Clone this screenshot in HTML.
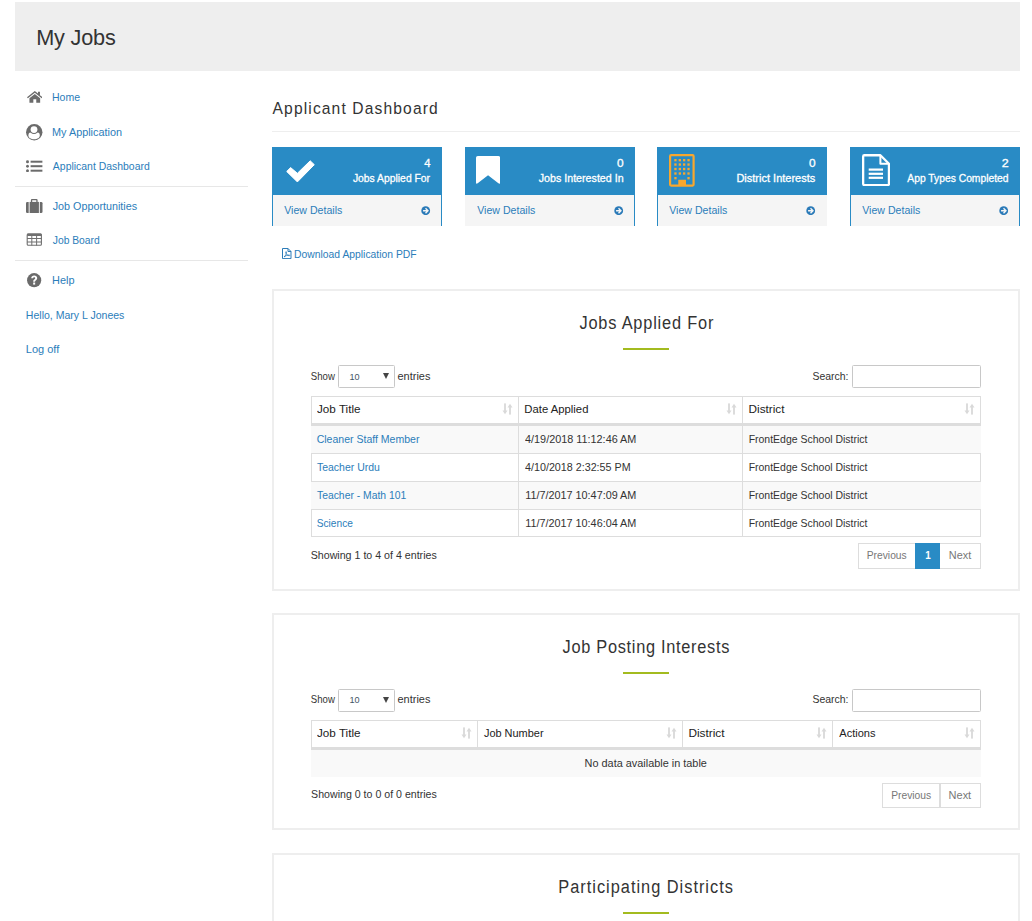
<!DOCTYPE html>
<html>
<head>
<meta charset="utf-8">
<title>My Jobs</title>
<style>
*{box-sizing:border-box;margin:0;padding:0}
html,body{width:1032px;height:921px;overflow:hidden;background:#fff}
body{font-family:"Liberation Sans",sans-serif;font-size:11px;color:#333;position:relative}
.b,.a{position:absolute;display:block}
.t{position:absolute;white-space:nowrap;transform-origin:0 0}
</style>
</head>
<body>
<div class="b" style="left:15px;top:2px;width:1005px;height:69px;background:#eeeeee;"></div>
<div class="b" style="left:15px;top:186px;width:233px;height:1px;background:#e7e7e7;"></div>
<div class="b" style="left:15px;top:260px;width:233px;height:1px;background:#e7e7e7;"></div>
<div class="b" style="left:272px;top:131px;width:748px;height:1px;background:#eeeeee;"></div>
<div class="b" style="left:272px;top:147px;width:170px;height:48px;background:#298bc5;"></div>
<div class="b" style="left:272px;top:195px;width:170px;height:31px;background:#f5f5f5;"></div>
<div class="b" style="left:272px;top:195px;width:1px;height:31px;background:#298bc5;"></div>
<div class="b" style="left:441px;top:195px;width:1px;height:31px;background:#298bc5;"></div>
<svg class="a" style="left:421.2px;top:205.7px" width="9.4" height="9.4" viewBox="0 0 10 10"><circle cx="5" cy="5" r="4.7" fill="#2a7ab8"/><path fill="none" stroke="#f5f5f5" stroke-width="1.5" d="M2.2 5 H7.2 M4.8 2.4 L7.4 5 L4.8 7.6"/></svg>
<div class="b" style="left:465px;top:147px;width:170px;height:48px;background:#298bc5;"></div>
<div class="b" style="left:465px;top:195px;width:170px;height:31px;background:#f5f5f5;"></div>
<div class="b" style="left:634px;top:195px;width:1px;height:31px;background:#298bc5;"></div>
<svg class="a" style="left:614.2px;top:205.7px" width="9.4" height="9.4" viewBox="0 0 10 10"><circle cx="5" cy="5" r="4.7" fill="#2a7ab8"/><path fill="none" stroke="#f5f5f5" stroke-width="1.5" d="M2.2 5 H7.2 M4.8 2.4 L7.4 5 L4.8 7.6"/></svg>
<div class="b" style="left:657px;top:147px;width:170px;height:48px;background:#298bc5;"></div>
<div class="b" style="left:657px;top:195px;width:170px;height:31px;background:#f5f5f5;"></div>
<div class="b" style="left:657px;top:195px;width:1px;height:31px;background:#298bc5;"></div>
<svg class="a" style="left:806.2px;top:205.7px" width="9.4" height="9.4" viewBox="0 0 10 10"><circle cx="5" cy="5" r="4.7" fill="#2a7ab8"/><path fill="none" stroke="#f5f5f5" stroke-width="1.5" d="M2.2 5 H7.2 M4.8 2.4 L7.4 5 L4.8 7.6"/></svg>
<div class="b" style="left:850px;top:147px;width:170px;height:48px;background:#298bc5;"></div>
<div class="b" style="left:850px;top:195px;width:170px;height:31px;background:#f5f5f5;"></div>
<div class="b" style="left:850px;top:195px;width:1px;height:31px;background:#298bc5;"></div>
<div class="b" style="left:1019px;top:195px;width:1px;height:31px;background:#298bc5;"></div>
<svg class="a" style="left:999.2px;top:205.7px" width="9.4" height="9.4" viewBox="0 0 10 10"><circle cx="5" cy="5" r="4.7" fill="#2a7ab8"/><path fill="none" stroke="#f5f5f5" stroke-width="1.5" d="M2.2 5 H7.2 M4.8 2.4 L7.4 5 L4.8 7.6"/></svg>
<div class="b" style="left:272px;top:289px;width:748px;height:302px;border:2px solid #eeeeee"></div>
<div class="b" style="left:623px;top:348px;width:46px;height:2px;background:#a3bb1f;"></div>
<div class="b" style="left:272px;top:613px;width:748px;height:217px;border:2px solid #eeeeee"></div>
<div class="b" style="left:623px;top:672px;width:46px;height:2px;background:#a3bb1f;"></div>
<div class="b" style="left:272px;top:853px;width:748px;height:120px;border:2px solid #eeeeee"></div>
<div class="b" style="left:623px;top:912px;width:46px;height:2px;background:#a3bb1f;"></div>
<div class="b" style="left:338px;top:365px;width:57px;height:23px;border:1px solid #c8c8c8;border-radius:1.5px;background:#fff"></div>
<div class="b" style="left:383px;top:373px;width:0;height:0;border-left:3px solid transparent;border-right:3px solid transparent;border-top:6px solid #444"></div>
<div class="b" style="left:852px;top:365px;width:129px;height:23px;border:1px solid #c8c8c8;border-radius:1.5px;background:#fff"></div>
<div class="b" style="left:338px;top:689px;width:57px;height:23px;border:1px solid #c8c8c8;border-radius:1.5px;background:#fff"></div>
<div class="b" style="left:383px;top:697px;width:0;height:0;border-left:3px solid transparent;border-right:3px solid transparent;border-top:6px solid #444"></div>
<div class="b" style="left:852px;top:689px;width:129px;height:23px;border:1px solid #c8c8c8;border-radius:1.5px;background:#fff"></div>
<div class="b" style="left:311px;top:396px;width:670px;height:1px;background:#ddd;"></div>
<div class="b" style="left:311px;top:396px;width:1px;height:27px;background:#ddd;"></div>
<div class="b" style="left:980px;top:396px;width:1px;height:27px;background:#ddd;"></div>
<div class="b" style="left:311px;top:423px;width:670px;height:3px;background:#ddd;"></div>
<div class="b" style="left:311px;top:426px;width:670px;height:27px;background:#f9f9f9;"></div>
<div class="b" style="left:311px;top:453px;width:670px;height:1px;background:#ddd;"></div>
<div class="b" style="left:311px;top:454px;width:1px;height:27px;background:#ddd;"></div>
<div class="b" style="left:980px;top:454px;width:1px;height:27px;background:#ddd;"></div>
<div class="b" style="left:311px;top:481px;width:670px;height:1px;background:#ddd;"></div>
<div class="b" style="left:311px;top:482px;width:670px;height:27px;background:#f9f9f9;"></div>
<div class="b" style="left:311px;top:509px;width:670px;height:1px;background:#ddd;"></div>
<div class="b" style="left:311px;top:510px;width:1px;height:26px;background:#ddd;"></div>
<div class="b" style="left:980px;top:510px;width:1px;height:26px;background:#ddd;"></div>
<div class="b" style="left:311px;top:536px;width:670px;height:1px;background:#ddd;"></div>
<div class="b" style="left:518px;top:396px;width:1px;height:141px;background:#ddd;"></div>
<div class="b" style="left:742px;top:396px;width:1px;height:141px;background:#ddd;"></div>
<svg class="a" style="left:502px;top:403px" width="11" height="12" viewBox="0 0 11 12"><g fill="#d9d9d9"><rect x="2.1" y=".4" width="1.8" height="8"/><path d="M.5 7.4 H5.5 L3 11.2z"/><rect x="7.1" y="3.6" width="1.8" height="8"/><path d="M5.5 4.6 H10.5 L8 .8z"/></g></svg>
<svg class="a" style="left:726px;top:403px" width="11" height="12" viewBox="0 0 11 12"><g fill="#d9d9d9"><rect x="2.1" y=".4" width="1.8" height="8"/><path d="M.5 7.4 H5.5 L3 11.2z"/><rect x="7.1" y="3.6" width="1.8" height="8"/><path d="M5.5 4.6 H10.5 L8 .8z"/></g></svg>
<svg class="a" style="left:964px;top:403px" width="11" height="12" viewBox="0 0 11 12"><g fill="#d9d9d9"><rect x="2.1" y=".4" width="1.8" height="8"/><path d="M.5 7.4 H5.5 L3 11.2z"/><rect x="7.1" y="3.6" width="1.8" height="8"/><path d="M5.5 4.6 H10.5 L8 .8z"/></g></svg>
<div class="b" style="left:858px;top:543px;width:123px;height:26px;border:1px solid #ddd;background:#fff"></div>
<div class="b" style="left:915px;top:543px;width:25px;height:26px;background:#298bc5;"></div>
<div class="b" style="left:311px;top:720px;width:670px;height:1px;background:#ddd;"></div>
<div class="b" style="left:311px;top:720px;width:1px;height:27px;background:#ddd;"></div>
<div class="b" style="left:980px;top:720px;width:1px;height:27px;background:#ddd;"></div>
<div class="b" style="left:311px;top:747px;width:670px;height:3px;background:#ddd;"></div>
<div class="b" style="left:311px;top:750px;width:670px;height:27px;background:#f9f9f9;"></div>
<div class="b" style="left:477px;top:720px;width:1px;height:27px;background:#ddd;"></div>
<div class="b" style="left:682px;top:720px;width:1px;height:27px;background:#ddd;"></div>
<div class="b" style="left:832px;top:720px;width:1px;height:27px;background:#ddd;"></div>
<svg class="a" style="left:461px;top:727px" width="11" height="12" viewBox="0 0 11 12"><g fill="#d9d9d9"><rect x="2.1" y=".4" width="1.8" height="8"/><path d="M.5 7.4 H5.5 L3 11.2z"/><rect x="7.1" y="3.6" width="1.8" height="8"/><path d="M5.5 4.6 H10.5 L8 .8z"/></g></svg>
<svg class="a" style="left:666px;top:727px" width="11" height="12" viewBox="0 0 11 12"><g fill="#d9d9d9"><rect x="2.1" y=".4" width="1.8" height="8"/><path d="M.5 7.4 H5.5 L3 11.2z"/><rect x="7.1" y="3.6" width="1.8" height="8"/><path d="M5.5 4.6 H10.5 L8 .8z"/></g></svg>
<svg class="a" style="left:816px;top:727px" width="11" height="12" viewBox="0 0 11 12"><g fill="#d9d9d9"><rect x="2.1" y=".4" width="1.8" height="8"/><path d="M.5 7.4 H5.5 L3 11.2z"/><rect x="7.1" y="3.6" width="1.8" height="8"/><path d="M5.5 4.6 H10.5 L8 .8z"/></g></svg>
<svg class="a" style="left:964px;top:727px" width="11" height="12" viewBox="0 0 11 12"><g fill="#d9d9d9"><rect x="2.1" y=".4" width="1.8" height="8"/><path d="M.5 7.4 H5.5 L3 11.2z"/><rect x="7.1" y="3.6" width="1.8" height="8"/><path d="M5.5 4.6 H10.5 L8 .8z"/></g></svg>
<div class="b" style="left:882px;top:783px;width:99px;height:25px;border:1px solid #ddd;background:#fff"></div>
<div class="b" style="left:939px;top:783px;width:2px;height:25px;background:#ddd;"></div>
<!-- home -->
<svg class="a" style="left:26.5px;top:91.4px" width="15.6" height="11.8" viewBox="0 0 16 12"><g fill="#6b6b6b"><path d="M8 0 L0 6.4 L.9 7.5 L8 1.8 L15.1 7.5 L16 6.4 L13.3 4.2 V.8 H11.3 V2.6z"/><path d="M8 2.9 L2.5 7.3 V12 H6.5 V8.3 H9.5 V12 H13.5 V7.3z"/></g></svg>
<!-- user -->
<svg class="a" style="left:26.2px;top:124px" width="16.5" height="16.5" viewBox="0 0 16.5 16.5"><circle cx="8.25" cy="8.25" r="8.2" fill="#6b6b6b"/><path fill="#fff" d="M2.4 11.6 C2.4 9.6 3.2 8.4 4.4 8.4 H11.8 C13 8.4 13.8 9.6 13.8 11.6 C13.8 13.8 11.4 15.3 8.1 15.3 C4.8 15.3 2.4 13.8 2.4 11.6z"/><circle cx="8" cy="5.6" r="4.5" fill="#6b6b6b"/><circle cx="8" cy="5.6" r="3.4" fill="#fff"/></svg>
<!-- list -->
<svg class="a" style="left:26.3px;top:160px" width="16.4" height="12.4" viewBox="0 0 16.4 12.4"><g fill="#6b6b6b"><circle cx="1.5" cy="1.7" r="1.5"/><circle cx="1.5" cy="6.2" r="1.5"/><circle cx="1.5" cy="10.7" r="1.5"/><rect x="4.6" y=".7" width="11.8" height="2"/><rect x="4.6" y="5.2" width="11.8" height="2"/><rect x="4.6" y="9.7" width="11.8" height="2"/></g></svg>
<!-- suitcase -->
<svg class="a" style="left:26.2px;top:199.2px" width="16.5" height="14" viewBox="0 0 16.5 14"><g fill="#6b6b6b"><path d="M1.3 2.9 H2.7 V14 H1.3 Q0 14 0 12.7 V4.2 Q0 2.9 1.3 2.9z"/><path d="M15.2 2.9 H13.8 V14 H15.2 Q16.5 14 16.5 12.7 V4.2 Q16.5 2.9 15.2 2.9z"/><rect x="3.6" y="2.9" width="9.3" height="11.1"/><path d="M4.9 3.1 V1.1 Q4.9 0 6 0 H10.5 Q11.6 0 11.6 1.1 V3.1 H10.3 V1.3 H6.2 V3.1z"/></g></svg>
<!-- table -->
<svg class="a" style="left:26px;top:233px" width="17" height="14" viewBox="0 0 17 14"><rect x="1.2" y="1" width="14.2" height="11.3" rx="1" fill="none" stroke="#707070" stroke-width="1.1"/><rect x="1" y=".6" width="14.6" height="2.3" rx=".6" fill="#707070"/><g fill="#707070"><rect x="5.3" y="2" width="1" height="10.5"/><rect x="10.1" y="2" width="1" height="10.5"/><rect x="1" y="5" width="14.6" height="1"/><rect x="1" y="8.5" width="14.6" height="1"/></g></svg>
<!-- help -->
<svg class="a" style="left:27.3px;top:273.3px" width="14.3" height="14.3" viewBox="0 0 14.3 14.3"><circle cx="7.15" cy="7.15" r="7.1" fill="#6b6b6b"/><path fill="#fff" d="M4.2 5.3 C4.3 3.5 5.6 2.5 7.2 2.5 C8.9 2.5 10.2 3.6 10.2 5.1 C10.2 6.3 9.5 6.9 8.8 7.4 C8.3 7.8 8.1 8 8.1 8.7 H6.2 C6.2 7.5 6.5 7 7.2 6.5 C7.8 6.1 8.2 5.8 8.2 5.2 C8.2 4.6 7.8 4.2 7.15 4.2 C6.5 4.2 6.1 4.6 6 5.3z"/><rect x="6.15" y="9.5" width="2" height="2.1" fill="#fff"/></svg>
<!-- check -->
<svg class="a" style="left:285.5px;top:159.6px" width="29.2" height="22.8" viewBox="0 0 29.2 22.8"><path fill="#fff" stroke="#fff" stroke-width="1" stroke-linejoin="round" d="M.7 11.5 L4.6 7.6 L11.4 13.3 L24.2 .8 L28.3 4.7 L11.4 21.9z"/></svg>
<!-- bookmark -->
<svg class="a" style="left:476px;top:156.2px" width="24.1" height="28.1" viewBox="0 0 24.1 28.1"><path fill="#fff" d="M1.8 0 H22.3 Q24.1 0 24.1 1.8 V26.4 Q24.1 28.6 22.4 27.3 L12.05 19.2 L1.7 27.3 Q0 28.6 0 26.4 V1.8 Q0 0 1.8 0z"/></svg>
<!-- building -->
<svg class="a" style="left:669.2px;top:153.9px" width="25.7" height="32.7" viewBox="0 0 25.7 32.1" preserveAspectRatio="none"><rect x="1.1" y="1.1" width="23.5" height="29.9" rx="1" fill="none" stroke="#f8a72e" stroke-width="2.2"/><g fill="#f8a72e">
<rect x="5.3" y="4.9" width="2.3" height="2.3"/><rect x="9.7" y="4.9" width="2.3" height="2.3"/><rect x="14" y="4.9" width="2.3" height="2.3"/><rect x="18.4" y="4.9" width="2.3" height="2.3"/>
<rect x="5.3" y="9.2" width="2.3" height="2.3"/><rect x="9.7" y="9.2" width="2.3" height="2.3"/><rect x="14" y="9.2" width="2.3" height="2.3"/><rect x="18.4" y="9.2" width="2.3" height="2.3"/>
<rect x="5.3" y="13.6" width="2.3" height="2.3"/><rect x="9.7" y="13.6" width="2.3" height="2.3"/><rect x="14" y="13.6" width="2.3" height="2.3"/><rect x="18.4" y="13.6" width="2.3" height="2.3"/>
<rect x="5.3" y="18" width="2.3" height="2.3"/><rect x="9.7" y="18" width="2.3" height="2.3"/><rect x="14" y="18" width="2.3" height="2.3"/><rect x="18.4" y="18" width="2.3" height="2.3"/>
<rect x="5.3" y="22.6" width="2.3" height="2.3"/><rect x="18.4" y="22.6" width="2.3" height="2.3"/>
<rect x="9.3" y="25.3" width="7.7" height="6"/></g></svg>
<!-- file -->
<svg class="a" style="left:861.9px;top:154.1px" width="28.1" height="32.3" viewBox="0 0 28.1 32.1"><path fill="none" stroke="#fff" stroke-width="2.3" stroke-linejoin="round" d="M2.4 1.15 H18.4 L26.95 9.7 V29.7 Q26.95 30.95 25.7 30.95 H2.4 Q1.15 30.95 1.15 29.7 V2.4 Q1.15 1.15 2.4 1.15z"/><path fill="none" stroke="#fff" stroke-width="2" stroke-linejoin="round" d="M18.4 1.15 V9.7 H26.95"/><g fill="#fff"><rect x="6.7" y="14.4" width="14.3" height="2.2"/><rect x="6.7" y="18.6" width="14.3" height="2.2"/><rect x="6.7" y="22.6" width="14.3" height="2.2"/></g></svg>
<!-- pdf -->
<svg class="a" style="left:282px;top:248.4px" width="9.5" height="11.1" viewBox="0 0 9.5 11.1"><path fill="none" stroke="#2a7ab8" stroke-width="1" d="M.5 .5 H6 L9 3.5 V10.6 H.5z M6 .5 V3.5 H9"/><path fill="none" stroke="#2a7ab8" stroke-width=".8" d="M2 9 C3.4 8 4.6 5.7 4.5 4.2 C4.4 3.3 3.6 3.5 3.7 4.3 C3.9 6 5.5 7.7 7.2 7.8 C8 7.8 8 7 7.2 7 C5.5 7 3.2 8 2 9z"/></svg>

<div class="t" id="title" style="left:36px;padding-left:0.23px;top:23px;font-size:22.8px;line-height:28px;color:#333;transform:scaleX(0.9500);letter-spacing:-0.191px">My Jobs</div>
<div class="t" id="home" style="left:52px;padding-left:0.04px;top:90px;font-size:11.2px;line-height:14px;color:#2b7dba;transform:scaleX(0.9392)">Home</div>
<div class="t" id="myapp" style="left:52px;padding-left:0.01px;top:125px;font-size:11.2px;line-height:14px;color:#2b7dba;transform:scaleX(0.9703)">My Application</div>
<div class="t" id="appdash" style="left:52px;padding-left:0.94px;top:159px;font-size:11.2px;line-height:14px;color:#2b7dba;transform:scaleX(0.9328)">Applicant Dashboard</div>
<div class="t" id="jobopp" style="left:52px;padding-left:0.76px;top:199px;font-size:11.2px;line-height:14px;color:#2b7dba;transform:scaleX(0.9620)">Job Opportunities</div>
<div class="t" id="jobboard" style="left:52px;padding-left:0.80px;top:233px;font-size:11.2px;line-height:14px;color:#2b7dba;transform:scaleX(0.9221)">Job Board</div>
<div class="t" id="help" style="left:52px;padding-left:0.00px;top:273px;font-size:11.2px;line-height:14px;color:#2b7dba;transform:scaleX(0.9757)">Help</div>
<div class="t" id="hello" style="left:25px;padding-left:0.89px;top:308px;font-size:11.2px;line-height:14px;color:#2b7dba;transform:scaleX(0.9415)">Hello, Mary L Jonees</div>
<div class="t" id="logoff" style="left:25px;padding-left:0.81px;top:342px;font-size:11.2px;line-height:14px;color:#2b7dba;transform:scaleX(0.9845)">Log off</div>
<div class="t" id="h1" style="left:272px;padding-left:0.61px;top:98px;font-size:16.8px;line-height:21px;color:#333;transform:scaleX(0.9300);letter-spacing:1.209px">Applicant Dashboard</div>
<div class="t" id="c0num" style="left:424px;padding-left:0.14px;top:156px;font-size:11.2px;line-height:14px;color:#fff;transform:scaleX(1.0090);-webkit-text-stroke:.3px #fff">4</div>
<div class="t" id="c0lab" style="left:352px;padding-left:1.01px;top:171px;font-size:11.2px;line-height:14px;color:#fff;transform:scaleX(0.9255);-webkit-text-stroke:.3px #fff">Jobs Applied For</div>
<div class="t" id="c0vd" style="left:284px;padding-left:0.27px;top:203px;font-size:11.2px;line-height:14px;color:#2b7dba;transform:scaleX(0.9457)">View Details</div>
<div class="t" id="c1num" style="left:616px;padding-left:0.88px;top:156px;font-size:11.2px;line-height:14px;color:#fff;transform:scaleX(1.0636);-webkit-text-stroke:.3px #fff">0</div>
<div class="t" id="c1lab" style="left:538px;padding-left:0.77px;top:171px;font-size:11.2px;line-height:14px;color:#fff;transform:scaleX(0.9542);-webkit-text-stroke:.3px #fff">Jobs Interested In</div>
<div class="t" id="c1vd" style="left:477px;padding-left:0.27px;top:203px;font-size:11.2px;line-height:14px;color:#2b7dba;transform:scaleX(0.9457)">View Details</div>
<div class="t" id="c2num" style="left:808px;padding-left:0.88px;top:156px;font-size:11.2px;line-height:14px;color:#fff;transform:scaleX(1.0636);-webkit-text-stroke:.3px #fff">0</div>
<div class="t" id="c2lab" style="left:736px;padding-left:0.40px;top:171px;font-size:11.2px;line-height:14px;color:#fff;transform:scaleX(0.9838);-webkit-text-stroke:.3px #fff">District Interests</div>
<div class="t" id="c2vd" style="left:669px;padding-left:0.27px;top:203px;font-size:11.2px;line-height:14px;color:#2b7dba;transform:scaleX(0.9457)">View Details</div>
<div class="t" id="c3num" style="left:1001px;padding-left:0.69px;top:156px;font-size:11.2px;line-height:14px;color:#fff;transform:scaleX(1.1159);-webkit-text-stroke:.3px #fff">2</div>
<div class="t" id="c3lab" style="left:907px;padding-left:0.30px;top:171px;font-size:11.2px;line-height:14px;color:#fff;transform:scaleX(0.9218);-webkit-text-stroke:.3px #fff">App Types Completed</div>
<div class="t" id="c3vd" style="left:862px;padding-left:0.27px;top:203px;font-size:11.2px;line-height:14px;color:#2b7dba;transform:scaleX(0.9457)">View Details</div>
<div class="t" id="dl" style="left:294px;padding-left:0.05px;top:247px;font-size:11.2px;line-height:14px;color:#2b7dba;transform:scaleX(0.9252)">Download Application PDF</div>
<div class="t" id="p1t" style="left:579px;padding-left:0.48px;top:312px;font-size:17.6px;line-height:22px;color:#333;transform:scaleX(0.9300);letter-spacing:0.863px">Jobs Applied For</div>
<div class="t" id="p2t" style="left:562px;padding-left:0.59px;top:636px;font-size:17.6px;line-height:22px;color:#333;transform:scaleX(0.9300);letter-spacing:0.755px">Job Posting Interests</div>
<div class="t" id="p3t" style="left:558px;padding-left:0.38px;top:876px;font-size:17.6px;line-height:22px;color:#333;transform:scaleX(0.9300);letter-spacing:1.064px">Participating Districts</div>
<div class="t" id="p1show" style="left:310px;padding-left:0.94px;top:370px;font-size:10.4px;line-height:13px;color:#333;transform:scaleX(0.9236)">Show</div>
<div class="t" id="p1ent" style="left:397px;padding-left:0.51px;top:370px;font-size:10.4px;line-height:13px;color:#333;transform:scaleX(1.0537)">entries</div>
<div class="t" id="p1srch" style="left:812px;padding-left:0.42px;top:370px;font-size:10.4px;line-height:13px;color:#333;transform:scaleX(1.0061)">Search:</div>
<div class="t" id="p1ten" style="left:349px;padding-left:0.48px;top:372px;font-size:8.6px;line-height:11px;color:#445566;transform:scaleX(1.0617)">10</div>
<div class="t" id="p2show" style="left:310px;padding-left:0.94px;top:693px;font-size:10.4px;line-height:13px;color:#333;transform:scaleX(0.9236)">Show</div>
<div class="t" id="p2ent" style="left:397px;padding-left:0.51px;top:693px;font-size:10.4px;line-height:13px;color:#333;transform:scaleX(1.0537)">entries</div>
<div class="t" id="p2srch" style="left:812px;padding-left:0.42px;top:693px;font-size:10.4px;line-height:13px;color:#333;transform:scaleX(1.0061)">Search:</div>
<div class="t" id="p2ten" style="left:349px;padding-left:0.48px;top:695px;font-size:8.6px;line-height:11px;color:#445566;transform:scaleX(1.0617)">10</div>
<div class="t" id="t1h1" style="left:317px;padding-left:0.02px;top:402px;font-size:11.2px;line-height:14px;color:#222;transform:scaleX(1.0439)">Job Title</div>
<div class="t" id="t1h2" style="left:524px;padding-left:0.37px;top:402px;font-size:11.2px;line-height:14px;color:#222;transform:scaleX(1.0095)">Date Applied</div>
<div class="t" id="t1h3" style="left:748px;padding-left:0.51px;top:402px;font-size:11.2px;line-height:14px;color:#222;transform:scaleX(1.0516)">District</div>
<div class="t" id="r0a" style="left:316px;padding-left:0.71px;top:432px;font-size:11.2px;line-height:14px;color:#2b7dba;transform:scaleX(0.9412)">Cleaner Staff Member</div>
<div class="t" id="r0b" style="left:525px;padding-left:0.05px;top:432px;font-size:11.2px;line-height:14px;color:#333;transform:scaleX(0.9692)">4/19/2018 11:12:46 AM</div>
<div class="t" id="r0c" style="left:748px;padding-left:0.68px;top:432px;font-size:11.2px;line-height:14px;color:#333;transform:scaleX(0.9369)">FrontEdge School District</div>
<div class="t" id="r1a" style="left:316px;padding-left:1.03px;top:460px;font-size:11.2px;line-height:14px;color:#2b7dba;transform:scaleX(0.9369)">Teacher Urdu</div>
<div class="t" id="r1b" style="left:525px;padding-left:0.06px;top:460px;font-size:11.2px;line-height:14px;color:#333;transform:scaleX(0.9584)">4/10/2018 2:32:55 PM</div>
<div class="t" id="r1c" style="left:748px;padding-left:0.68px;top:460px;font-size:11.2px;line-height:14px;color:#333;transform:scaleX(0.9369)">FrontEdge School District</div>
<div class="t" id="r2a" style="left:316px;padding-left:1.04px;top:488px;font-size:11.2px;line-height:14px;color:#2b7dba;transform:scaleX(0.9269)">Teacher - Math 101</div>
<div class="t" id="r2b" style="left:525px;padding-left:0.18px;top:488px;font-size:11.2px;line-height:14px;color:#333;transform:scaleX(0.9681)">11/7/2017 10:47:09 AM</div>
<div class="t" id="r2c" style="left:748px;padding-left:0.68px;top:488px;font-size:11.2px;line-height:14px;color:#333;transform:scaleX(0.9369)">FrontEdge School District</div>
<div class="t" id="r3a" style="left:316px;padding-left:0.81px;top:516px;font-size:11.2px;line-height:14px;color:#2b7dba;transform:scaleX(0.9096)">Science</div>
<div class="t" id="r3b" style="left:525px;padding-left:0.18px;top:516px;font-size:11.2px;line-height:14px;color:#333;transform:scaleX(0.9681)">11/7/2017 10:46:04 AM</div>
<div class="t" id="r3c" style="left:748px;padding-left:0.68px;top:516px;font-size:11.2px;line-height:14px;color:#333;transform:scaleX(0.9369)">FrontEdge School District</div>
<div class="t" id="info1" style="left:310px;padding-left:0.73px;top:548px;font-size:10.8px;line-height:14px;color:#333;transform:scaleX(0.9860)">Showing 1 to 4 of 4 entries</div>
<div class="t" id="pg1p" style="left:866px;padding-left:0.83px;top:548px;font-size:11.2px;line-height:14px;color:#777;transform:scaleX(0.9169)">Previous</div>
<div class="t" id="pg1n" style="left:925px;padding-left:0.43px;top:548px;font-size:11.2px;line-height:14px;color:#fff;transform:scaleX(0.8817);font-weight:bold">1</div>
<div class="t" id="pg1x" style="left:948px;padding-left:0.83px;top:548px;font-size:11.2px;line-height:14px;color:#777;transform:scaleX(0.9721)">Next</div>
<div class="t" id="t2h1" style="left:317px;padding-left:0.02px;top:726px;font-size:11.2px;line-height:14px;color:#222;transform:scaleX(1.0439)">Job Title</div>
<div class="t" id="t2h2" style="left:483px;padding-left:0.95px;top:726px;font-size:11.2px;line-height:14px;color:#222;transform:scaleX(0.9789)">Job Number</div>
<div class="t" id="t2h3" style="left:688px;padding-left:0.40px;top:726px;font-size:11.2px;line-height:14px;color:#222;transform:scaleX(1.0577)">District</div>
<div class="t" id="t2h4" style="left:839px;padding-left:0.28px;top:726px;font-size:11.2px;line-height:14px;color:#222;transform:scaleX(0.9873)">Actions</div>
<div class="t" id="nodata" style="left:584px;padding-left:0.62px;top:756px;font-size:11.2px;line-height:14px;color:#333;transform:scaleX(0.9732)">No data available in table</div>
<div class="t" id="info2" style="left:311px;padding-left:0.12px;top:787px;font-size:10.8px;line-height:14px;color:#333;transform:scaleX(0.9828)">Showing 0 to 0 of 0 entries</div>
<div class="t" id="pg2p" style="left:891px;padding-left:0.17px;top:788px;font-size:11.2px;line-height:14px;color:#777;transform:scaleX(0.9193)">Previous</div>
<div class="t" id="pg2x" style="left:948px;padding-left:0.61px;top:788px;font-size:11.2px;line-height:14px;color:#777;transform:scaleX(0.9812)">Next</div>
</body>
</html>
